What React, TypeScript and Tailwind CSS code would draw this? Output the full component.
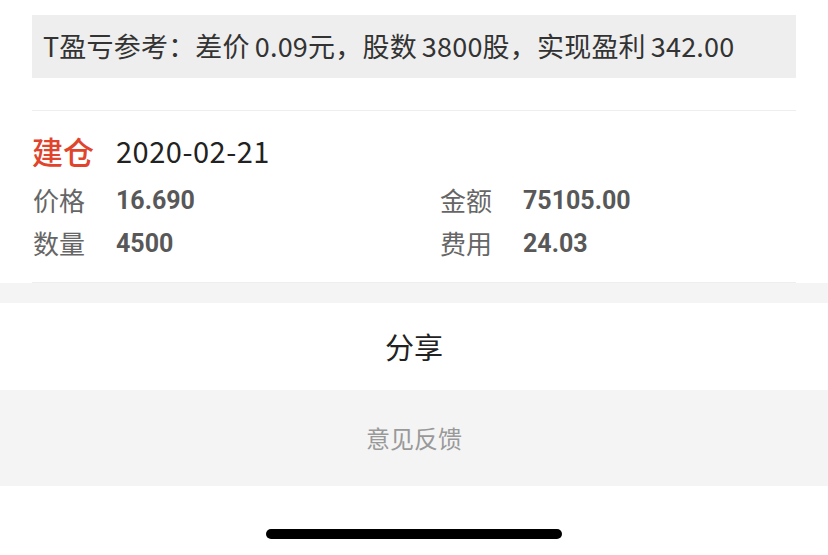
import React from 'react'

const cjk = { fontFamily: '"Noto Sans CJK SC", "Noto Sans", sans-serif' }
const num = { fontFamily: 'Roboto, "Noto Sans CJK SC", sans-serif' }

function Field({ label, value }: { label: string; value: string }) {
  return (
    <div className="flex items-center w-[407px] shrink-0">
      <span className="w-[84px] pl-px text-[26px] text-[#666]" style={cjk}>{label}</span>
      <span className="text-[25px] font-bold text-[#585858] pt-[2px]" style={num}>{value}</span>
    </div>
  )
}

export default function App() {
  return (
    <div className="w-[828px] h-[555px] bg-white flex flex-col overflow-hidden" style={cjk}>
      {/* 做T盈亏汇总 */}
      <div className="px-[32px] pt-[15px]">
        <div className="h-[63px] bg-[#eeeeee] flex items-center pl-[11px] text-[27px] tracking-[0.2px] text-[#333]">
          T盈亏参考：差价<span className="ml-[5px]">0.09</span>元，股数<span className="ml-[5px]">3800</span>股，实现盈利<span className="ml-[5px]">342.00</span>
        </div>
        <div className="mt-[32px] h-px bg-[#eeeeee]" />

        {/* 建仓记录 */}
        <div className="pt-[18px] pb-[18px]">
          <div className="h-[44px] flex items-center">
            <span className="w-[84px] text-[31px] font-medium text-[#e0442c]">建仓</span>
            <span className="text-[29px] tracking-[0.5px] text-[#222]">2020-02-21</span>
          </div>
          <div className="mt-[5px] h-[43px] flex items-center">
            <Field label="价格" value="16.690" />
            <Field label="金额" value="75105.00" />
          </div>
          <div className="h-[43px] flex items-center">
            <Field label="数量" value="4500" />
            <Field label="费用" value="24.03" />
          </div>
        </div>
        <div className="h-px bg-[#eeeeee]" />
      </div>

      <div className="h-[20px] bg-[#f4f4f4]" />

      <div className="h-[87px] flex items-center justify-center text-[29px] text-[#222]">分享</div>
      <div className="h-[96px] bg-[#f4f4f4] flex items-center justify-center text-[24px] text-[#999]">意见反馈</div>

      <div className="flex-1 flex justify-center pt-[43px]">
        <div className="w-[296px] h-[10px] rounded-full bg-black" />
      </div>
    </div>
  )
}
